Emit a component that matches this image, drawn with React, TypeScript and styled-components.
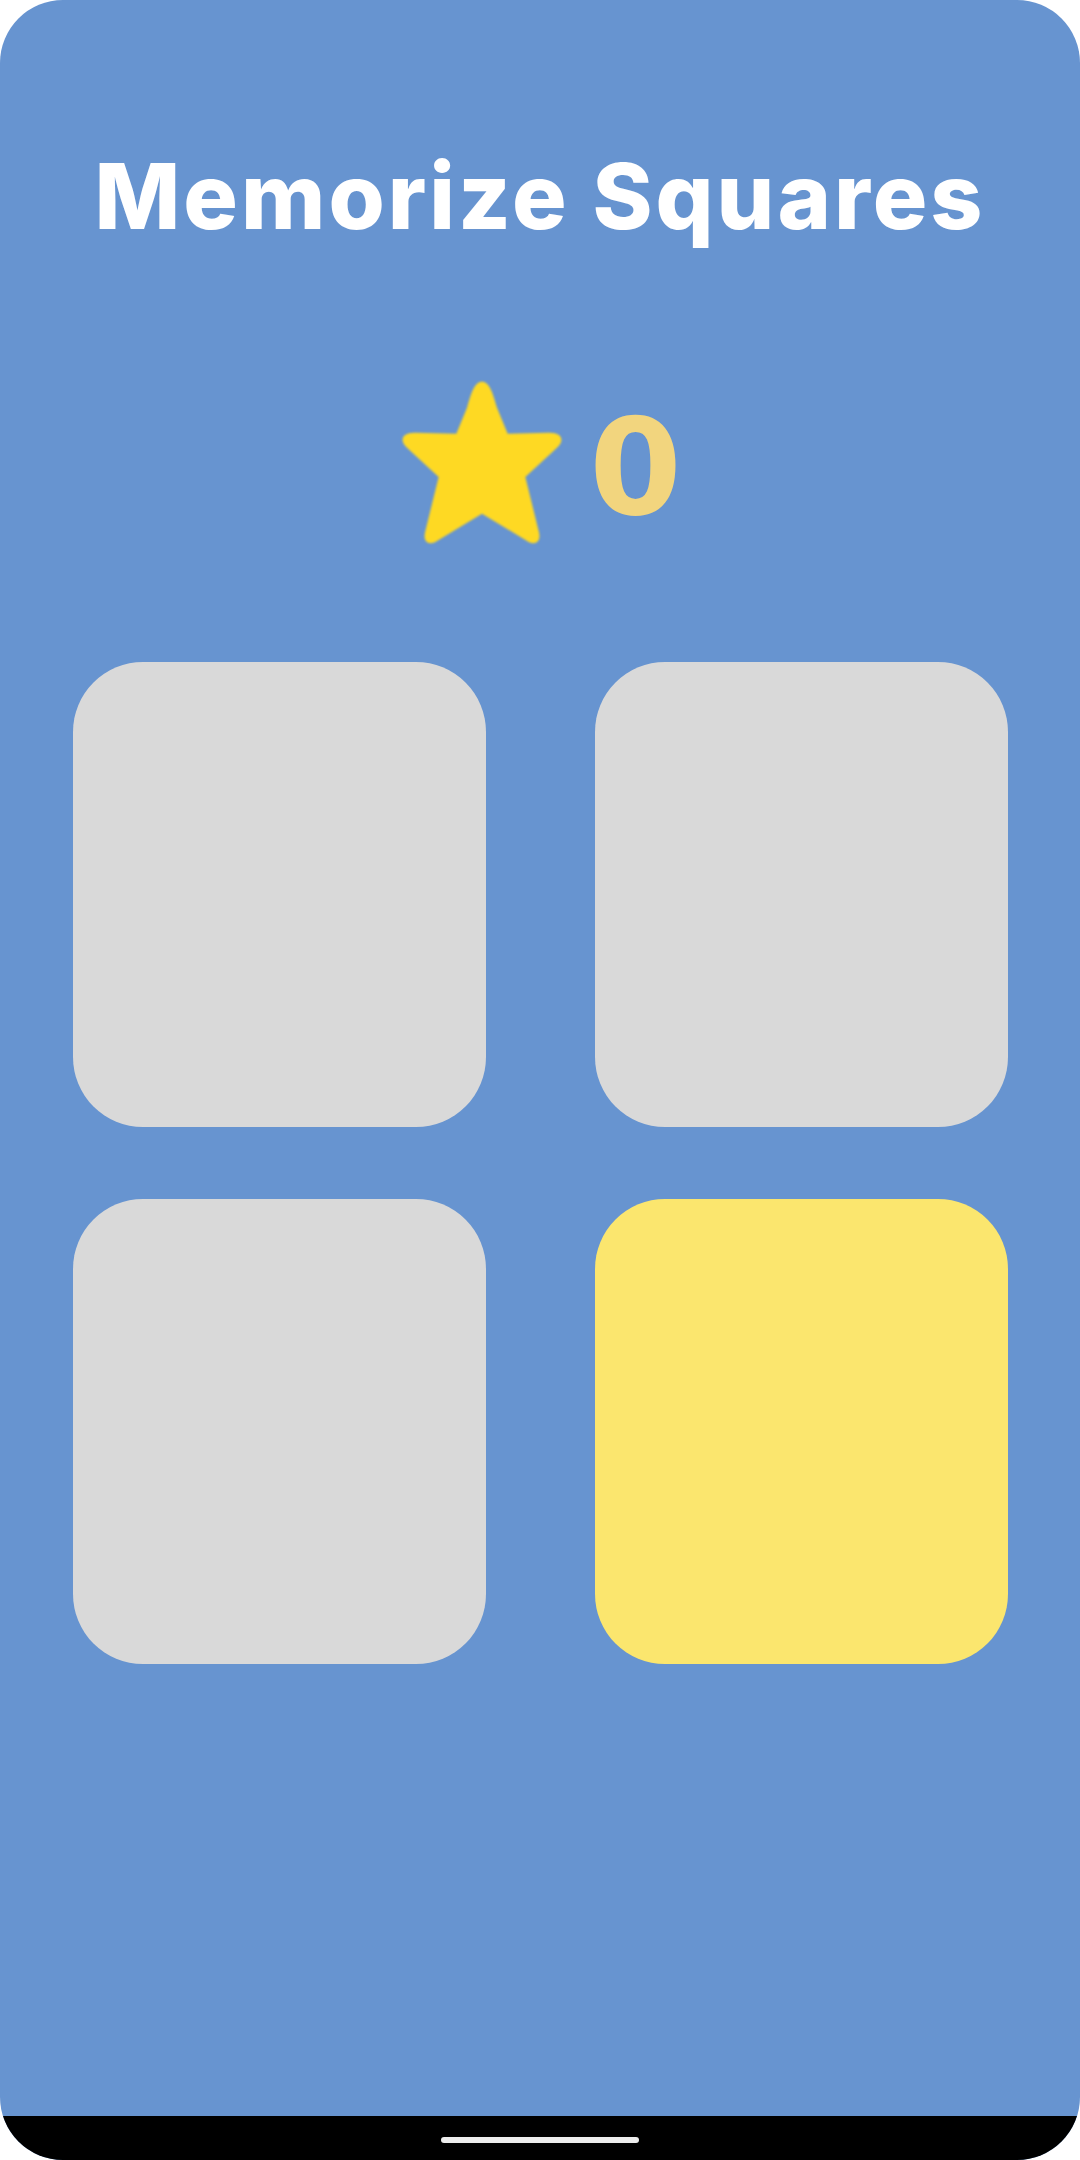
import React from 'react';
import styled, { createGlobalStyle } from 'styled-components';

const BLUE = '#6794d0';

const GlobalStyle = createGlobalStyle`
    html, body {
        margin: 0;
        padding: 0;
        background: #ffffff;
    }
`;

// Five point star with fat arms and rounded tips.
// Drawn on a 3x grid, the viewBox brings it back to 160px.
const STAR_PATH = [
    'M 240 112',
    'C 256 52, 268 34, 285 34',
    'C 302 34, 314 52, 330 112',
    'L 362 190',
    'L 484 187',
    'C 526 185, 536 212, 506 236',
    'L 415 320',
    'L 454 478',
    'C 466 516, 444 530, 414 508',
    'L 285 430',
    'L 156 508',
    'C 126 530, 104 516, 116 478',
    'L 155 320',
    'L 64 236',
    'C 34 212, 44 185, 86 187',
    'L 208 190',
    'Z',
].join(' ');

const TILES = [false, false, false, true];

const App: React.FC = () => {
    return (
        <>
            <GlobalStyle />
            <Screen>
                <Content>
                    <Title>Memorize Squares</Title>

                    <ScoreRow>
                        <StarIcon viewBox="45 35 480 480" aria-hidden>
                            <path d={ STAR_PATH } fill="#fed923" strokeLinejoin="round" />
                        </StarIcon>
                        <Score>0</Score>
                    </ScoreRow>

                    <Board>
                        { TILES.map((lit, i) => (
                            <Tile key={ i } $lit={ lit } />
                        )) }
                    </Board>
                </Content>

                <HomeBar>
                    <HomeIndicator />
                </HomeBar>
            </Screen>
        </>
    );
};

const Screen = styled.div`
    width: 1080px;
    height: 2160px;
    border-radius: 63px;
    overflow: hidden;
    background: ${BLUE};
    display: flex;
    flex-direction: column;
`;

const Content = styled.main`
    flex: 1;
    display: flex;
    flex-direction: column;
    align-items: center;
    padding-top: 151px;
`;

const Title = styled.h1`
    margin: 0;
    font-family: Inter, "Liberation Sans", Arial, sans-serif;
    font-weight: 800;
    font-size: 91px;
    line-height: 1;
    letter-spacing: 3px;
    color: #ffffff;
`;

const ScoreRow = styled.div`
    margin-top: 140px;
    padding-left: 4px;
    display: flex;
    align-items: center;
    gap: 27px;
`;

const StarIcon = styled.svg`
    width: 160px;
    height: 160px;
    overflow: visible;
    filter: blur(0.8px);
`;

const Score = styled.span`
    font-family: "DejaVu Sans", Verdana, sans-serif;
    font-weight: 700;
    font-size: 133px;
    line-height: 1;
    padding-top: 12px;
    color: #f2d57e;
`;

const Board = styled.div`
    margin-top: 120px;
    display: grid;
    grid-template-columns: repeat(2, 413px);
    grid-auto-rows: 465px;
    column-gap: 109px;
    row-gap: 72px;
`;

const Tile = styled.div<{ $lit: boolean }>`
    border-radius: 70px;
    background: ${({ $lit }) => ($lit ? '#fbe66e' : '#d9d9d9')};
`;

const HomeBar = styled.div`
    height: 44px;
    background: #000000;
    display: flex;
    justify-content: center;
    padding-top: 21px;
    box-sizing: border-box;
`;

const HomeIndicator = styled.div`
    width: 198px;
    height: 6px;
    border-radius: 3px;
    background: #ededed;
`;

export default App;
